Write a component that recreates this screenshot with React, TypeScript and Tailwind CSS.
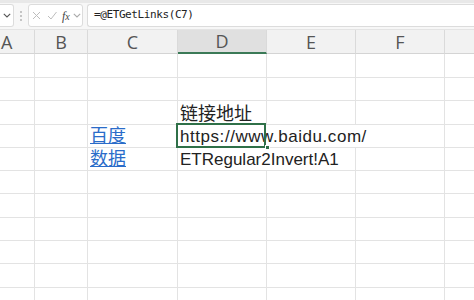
import React from "react";

const COLS = "grid grid-cols-[35px_53px_90px_89px_89px_89px_89px]";
const rowH = [
  "h-[24px]", "h-[23px]", "h-[24px]", "h-[23px]", "h-[23px]", "h-[23px]",
  "h-[24px]", "h-[23px]", "h-[23px]", "h-[24px]", "h-[23px]",
];

const latin = "block font-['Liberation_Sans',Arial,sans-serif] text-[17px] leading-[20px] text-[#222]";
const cjk = "block font-['Liberation_Sans','Noto_Sans_CJK_SC',sans-serif] text-[18px] leading-[19px]";

function Chevron({ className = "" }: { className?: string }) {
  return (
    <svg width="8" height="5" viewBox="0 0 8 5" className={className}>
      <path d="M0.8 0.8 L4 4 L7.2 0.8" fill="none" stroke="currentColor" strokeWidth="1.1" />
    </svg>
  );
}

function FormulaBar() {
  return (
    <div className="h-[25px] flex items-center bg-[#f7f7f7]">
      <div className="h-[23px] w-[14px] bg-white border border-l-0 border-[#dcdcdc] rounded-r-[3px] flex items-center justify-start pl-[3px] text-[#555]">
        <Chevron />
      </div>
      <div className="w-[14px] flex flex-col items-center justify-center gap-[2px]">
        <span className="w-[2px] h-[2px] rounded-full bg-[#b5b5b5]" />
        <span className="w-[2px] h-[2px] rounded-full bg-[#b5b5b5]" />
        <span className="w-[2px] h-[2px] rounded-full bg-[#b5b5b5]" />
      </div>
      <div className="h-[23px] w-[55px] bg-white border border-[#dcdcdc] rounded-[3px] flex items-center pl-[3px] gap-[6px]">
        <svg width="9" height="9" viewBox="0 0 9 9">
          <path d="M1 1 L8 8 M8 1 L1 8" stroke="#bdbdbd" strokeWidth="1" />
        </svg>
        <svg width="10" height="9" viewBox="0 0 10 9">
          <path d="M1 5 L4 8 L9.5 1" fill="none" stroke="#bdbdbd" strokeWidth="1" />
        </svg>
        <span className="font-['Liberation_Serif',serif] italic text-[12px] leading-none text-[#444] -ml-[1px]">
          f<span className="text-[10px]">x</span>
        </span>
        <Chevron className="text-[#aaa] -ml-[3px]" />
      </div>
      <div className="h-[23px] flex-1 ml-[4px] bg-white border border-r-0 border-[#dcdcdc] rounded-l-[3px] flex items-center pl-[6px]">
        <span className="font-['DejaVu_Sans_Mono',monospace] text-[11px] tracking-[-0.4px] text-[#222] whitespace-pre">
          =@ETGetLinks(C7)
        </span>
      </div>
    </div>
  );
}

function Header() {
  const letters = ["A", "B", "C", "D", "E", "F", ""];
  return (
    <div className={`${COLS} h-[24px] bg-[#f2f2f2]`}>
      {letters.map((l, i) => {
        const sel = i === 3;
        return (
          <div
            key={i}
            className={`flex items-center border-r border-[#dadada] ${
              sel ? "bg-[#e0e0e0] border-b-2 border-b-[#3b7a57]" : "border-b border-b-[#d4d4d4]"
            } ${i === 0 ? "justify-start pl-[1px]" : "justify-center"}`}
          >
            <span className="font-['Open_Sans',sans-serif] text-[18px] leading-none text-[#555]">{l}</span>
          </div>
        );
      })}
    </div>
  );
}

type CellProps = { children?: React.ReactNode; noRight?: boolean };
function Cell({ children, noRight }: CellProps) {
  return (
    <div className={`relative border-b border-[#e3e3e3] ${noRight ? "" : "border-r"}`}>
      {children}
    </div>
  );
}

function TextIn({ children, bottom = "bottom-0" }: { children: React.ReactNode; bottom?: string }) {
  return (
    <div className={`absolute left-[2px] ${bottom} whitespace-nowrap z-10`}>
      {children}
    </div>
  );
}

export default function App() {
  return (
    <div className="w-[474px] h-[300px] overflow-hidden bg-white">
      <div className="h-[3px] bg-[#e8e8e8]" />
      <FormulaBar />
      <div className="h-[2px] bg-[#f7f7f7] border-b border-[#e4e4e4]" />
      <Header />
      {rowH.map((h, r) => (
        <div key={r} className={`${COLS} ${h}`}>
          {Array.from({ length: 7 }).map((_, c) => {
            let content: React.ReactNode = null;
            let noRight = false;
            if (r === 2 && c === 3) {
              content = (
                <TextIn bottom="bottom-0">
                  <span className={`${cjk} text-[#222]`}>链接地址</span>
                </TextIn>
              );
            }
            if (r === 3 && c === 2) {
              content = (
                <TextIn bottom="bottom-[1px]">
                  <span className={`${cjk} text-[#2a6cc9] underline underline-offset-[1px] decoration-[1px]`}>百度</span>
                </TextIn>
              );
            }
            if (r === 4 && c === 2) {
              content = (
                <TextIn bottom="bottom-[1px]">
                  <span className={`${cjk} text-[#2a6cc9] underline underline-offset-[1px] decoration-[1px]`}>数据</span>
                </TextIn>
              );
            }
            if (r === 3 && c === 3) {
              noRight = true;
              content = (
                <>
                  <TextIn>
                    <span className={`${latin} tracking-[0.55px]`}>https://www.baidu.com/</span>
                  </TextIn>
                  <div className="absolute -left-[2px] -top-[2px] w-[90px] h-[25px] border-2 border-[#2f7048] z-20" />
                  <div className="absolute -right-[3px] -bottom-[3px] w-[5px] h-[5px] bg-[#2f7048] border border-white z-30" />
                </>
              );
            }
            if (r === 3 && c === 4) noRight = true;
            if (r === 4 && c === 3) {
              noRight = true;
              content = (
                <TextIn>
                  <span className={latin}>ETRegular2Invert!A1</span>
                </TextIn>
              );
            }
            return (
              <Cell key={c} noRight={noRight}>
                {content}
              </Cell>
            );
          })}
        </div>
      ))}
    </div>
  );
}
